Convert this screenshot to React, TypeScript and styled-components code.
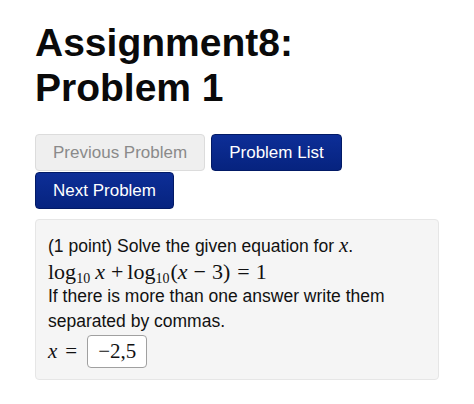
import React from "react";
import styled, { createGlobalStyle } from "styled-components";

const Global = createGlobalStyle`
  html, body { margin: 0; padding: 0; background: #ffffff; }
  body { font-family: "Liberation Sans", Arial, sans-serif; color: #111; }
`;

const Page = styled.div`
  padding: 20px 35px 0 35px;
  width: 404px;
`;

const Title = styled.h1`
  margin: 0;
  font-family: "Liberation Sans", Arial, sans-serif;
  font-weight: 700;
  font-size: 39px;
  line-height: 45px;
  color: #0a0a0a;
`;

const ButtonBar = styled.div`
  display: flex;
  flex-wrap: wrap;
  gap: 1px 6px;
  max-width: 330px;
  margin-top: 24px;
`;

const Btn = styled.button<{ $variant: "primary" | "disabled" }>`
  font-family: "Liberation Sans", Arial, sans-serif;
  font-size: 17px;
  height: 37px;
  padding: 0 17px;
  border-radius: 4px;
  cursor: pointer;
  border: 1px solid
    ${(p) => (p.$variant === "primary" ? "#021a66" : "#dcdcdc")};
  color: ${(p) => (p.$variant === "primary" ? "#ffffff" : "#8a8a8a")};
  background: ${(p) =>
    p.$variant === "primary"
      ? "linear-gradient(#0d2e97, #06237f)"
      : "#efefef"};
`;

const Panel = styled.div`
  margin-top: 10px;
  background: #f5f5f5;
  border: 1px solid #e6e6e6;
  border-radius: 4px;
  padding: 13px 12px 11px 12px;
  font-size: 17.5px;
  line-height: 25px;
  color: #111;
`;

const Line = styled.div``;

const MathLine = styled.div`
  display: flex;
  align-items: baseline;
  height: 25px;
  font-family: "Liberation Serif", "Times New Roman", serif;
  font-size: 22px;
  line-height: 25px;
  white-space: nowrap;
`;

const Var = styled.span`
  font-family: "Liberation Serif", "Times New Roman", serif;
  font-style: italic;
  font-size: 21px;
`;

const Sub = styled.span<{ $after: number }>`
  font-size: 14px;
  position: relative;
  top: 4px;
  margin-right: ${(p) => p.$after}px;
`;

const Op = styled.span<{ $l: number; $r: number }>`
  margin: 0 ${(p) => p.$r}px 0 ${(p) => p.$l}px;
`;

const AnswerRow = styled.div`
  display: flex;
  align-items: center;
  gap: 10px;
  margin-top: 1px;
  font-family: "Liberation Serif", "Times New Roman", serif;
  font-size: 21px;
`;

const AnswerLabel = styled.span`
  display: flex;
  gap: 8px;
`;

const AnswerBox = styled.div`
  width: 58px;
  height: 31px;
  border: 1px solid #a0a0a0;
  border-radius: 4px;
  background: #ffffff;
  display: flex;
  align-items: center;
  justify-content: center;
  font-family: "Liberation Serif", "Times New Roman", serif;
  font-size: 21px;
`;

export default function App() {
  return (
    <>
      <Global />
      <Page>
        <Title>
          Assignment8:
          <br />
          Problem 1
        </Title>
        <ButtonBar>
          <Btn $variant="disabled">Previous Problem</Btn>
          <Btn $variant="primary">Problem List</Btn>
          <Btn $variant="primary">Next Problem</Btn>
        </ButtonBar>
        <Panel>
          <Line>
            (1 point) Solve the given equation for <Var>x</Var>.
          </Line>
          <MathLine>
            <span>log</span>
            <Sub $after={5}>10</Sub>
            <i>x</i>
            <Op $l={6} $r={4}>+</Op>
            <span>log</span>
            <Sub $after={1}>10</Sub>
            <span>(</span>
            <i>x</i>
            <Op $l={6} $r={6}>−</Op>
            <span>3)</span>
            <Op $l={7} $r={6}>=</Op>
            <span>1</span>
          </MathLine>
          <Line>If there is more than one answer write them separated by commas.</Line>
          <AnswerRow>
            <AnswerLabel>
              <i>x</i>
              <span>=</span>
            </AnswerLabel>
            <AnswerBox>−2,5</AnswerBox>
          </AnswerRow>
        </Panel>
      </Page>
    </>
  );
}
